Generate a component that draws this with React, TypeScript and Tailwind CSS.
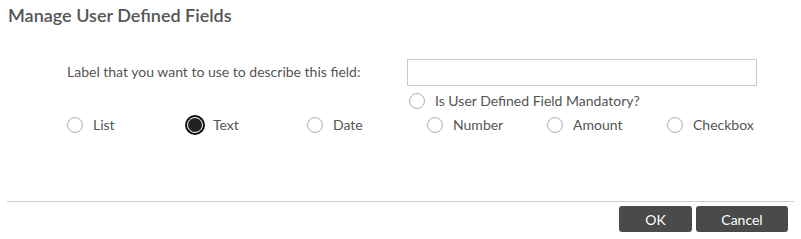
import React from 'react';

type RadioProps = { label: string; checked?: boolean };

const Radio: React.FC<RadioProps> = ({ label, checked }) => (
  <label className="flex items-center gap-[10px] text-[14px] text-[#555] cursor-pointer">
    <span className="relative w-[16px] h-[16px] shrink-0">
      {checked ? (
        <span className="absolute -left-[2px] -top-[2px] w-[20px] h-[20px] rounded-full bg-[#111] flex items-center justify-center">
          <span className="w-[16px] h-[16px] rounded-full border border-white bg-[#222]" />
        </span>
      ) : (
        <span className="block w-[16px] h-[16px] rounded-full border border-[#adadad] bg-white" />
      )}
    </span>
    <span>{label}</span>
  </label>
);

const App: React.FC = () => {
  const types = ['List', 'Text', 'Date', 'Number', 'Amount', 'Checkbox'];

  return (
    <div className="w-[801px] h-[239px] bg-white font-['Lato','Liberation_Sans',sans-serif] overflow-hidden">
      <h1 className="px-[8px] pt-[4px] h-[30px] text-[18px] font-semibold text-[#555] leading-[22px]">
        Manage User Defined Fields
      </h1>

      <div className="mt-[29px] pl-[67px]">
        <div className="flex items-center">
          <span className="w-[340px] text-[14px] text-[#555] -mt-[2px]">Label that you want to use to describe this field:</span>
          <input type="text" className="w-[350px] h-[27px] border border-[#c8c8c8] bg-white outline-none px-2 text-[14px]" />
        </div>

        <div className="pl-[342px] h-[29px] flex items-center">
          <Radio label="Is User Defined Field Mandatory?" />
        </div>

        <div className="grid grid-cols-[repeat(6,120px)] h-[18px] items-center -mt-[1px]">
          {types.map((t) => (
            <Radio key={t} label={t} checked={t === 'Text'} />
          ))}
        </div>
      </div>

      <div className="mt-[69px] mx-[7px] border-t border-[#cfcfcf]" />

      <div className="flex justify-end gap-[4px] pr-[13px] pt-[4px]">
        <button className="w-[73px] h-[26px] rounded-[3px] bg-[#4a4a4a] text-white text-[14px]">OK</button>
        <button className="w-[92px] h-[26px] rounded-[3px] bg-[#4a4a4a] text-white text-[14px]">Cancel</button>
      </div>
    </div>
  );
};

export default App;
